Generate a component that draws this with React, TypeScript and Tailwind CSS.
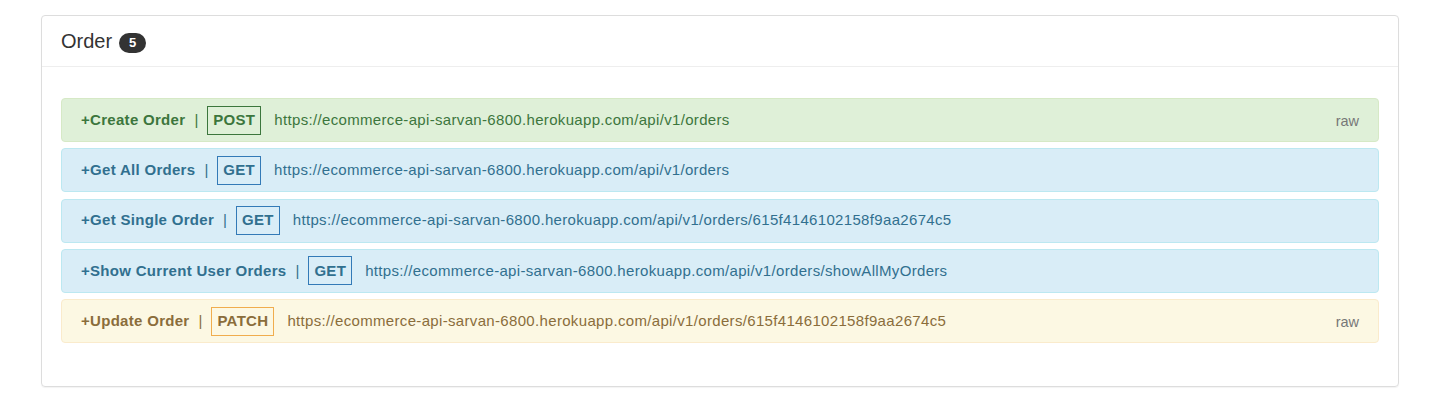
const rows = [
  { title: "+Create Order", method: "POST", url: "https://ecommerce-api-sarvan-6800.herokuapp.com/api/v1/orders", tone: "success", raw: true },
  { title: "+Get All Orders", method: "GET", url: "https://ecommerce-api-sarvan-6800.herokuapp.com/api/v1/orders", tone: "info", raw: false },
  { title: "+Get Single Order", method: "GET", url: "https://ecommerce-api-sarvan-6800.herokuapp.com/api/v1/orders/615f4146102158f9aa2674c5", tone: "info", raw: false },
  { title: "+Show Current User Orders", method: "GET", url: "https://ecommerce-api-sarvan-6800.herokuapp.com/api/v1/orders/showAllMyOrders", tone: "info", raw: false },
  { title: "+Update Order", method: "PATCH", url: "https://ecommerce-api-sarvan-6800.herokuapp.com/api/v1/orders/615f4146102158f9aa2674c5", tone: "warning", raw: true },
];

const rowTone: Record<string, string> = {
  success: "bg-[#dff0d8] border-[#d6e9c6] text-[#3c763d]",
  info: "bg-[#d9edf7] border-[#bce8f1] text-[#31708f]",
  warning: "bg-[#fcf8e3] border-[#faebcc] text-[#8a6d3b]",
};

function MethodBox({ method }: { method: string }) {
  const color =
    method === "POST"
      ? "border-[#3c763d]"
      : method === "PATCH"
        ? "border-[#f0ad4e]"
        : "border-[#337ab7]";
  return (
    <span className={`border ${color} px-[5px] h-[29px] flex items-center font-bold text-[15px] tracking-[0.3px]`}>
      {method}
    </span>
  );
}

export default function App() {
  return (
    <div className="bg-white pl-[41px] pr-[31px] pt-[15px] pb-[14px] font-['Liberation_Sans',Arial,sans-serif] text-[#333]">
      <div className="border border-[#ddd] rounded-[4px] shadow-[0_1px_1px_rgba(0,0,0,0.05)]">
        <div className="h-[51px] border-b border-[#eee] px-[19px] flex items-center">
          <span className="text-[20px] leading-none">Order</span>
          <span className="ml-[7px] mt-[3px] bg-[#333] text-white text-[13px] font-bold rounded-[10px] h-[20px] min-w-[27px] px-[7px] flex items-center justify-center">
            5
          </span>
        </div>
        <div className="px-[19px] pt-[31px] pb-[43px] flex flex-col gap-[6.25px]">
          {rows.map((r) => (
            <div
              key={r.title}
              className={`h-[44px] border rounded-[4px] pl-[19px] pr-[19px] flex items-center text-[15px] ${rowTone[r.tone]}`}
            >
              <span className="font-bold tracking-[0.3px]">{r.title}</span>
              <span className="mx-[9px]">|</span>
              <MethodBox method={r.method} />
              <span className="ml-[13px] tracking-[0.33px]">{r.url}</span>
              {r.raw && <span className="ml-auto text-[#777] text-[14.5px] mt-[3px]">raw</span>}
            </div>
          ))}
        </div>
      </div>
    </div>
  );
}
